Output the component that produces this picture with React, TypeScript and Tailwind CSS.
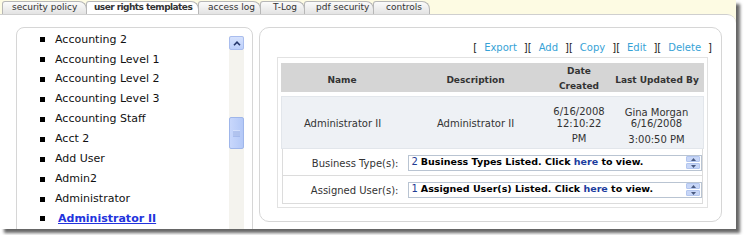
import React from "react";

const tabs = [
  { label: "security policy", cls: "w-[85px] pl-[9px]", sel: false },
  { label: "user rights templates", cls: "w-[113px] pl-[7px]", sel: true },
  { label: "access log", cls: "w-[63px] pl-[9px]", sel: false },
  { label: "T-Log", cls: "w-[45px] pl-[12px]", sel: false },
  { label: "pdf security", cls: "w-[70px] pl-[11px]", sel: false },
  { label: "controls", cls: "w-[57px] pl-[12px]", sel: false },
];

const items = [
  "Accounting 2",
  "Accounting Level 1",
  "Accounting Level 2",
  "Accounting Level 3",
  "Accounting Staff",
  "Acct 2",
  "Add User",
  "Admin2",
  "Administrator",
];

const actions = ["Export", "Add", "Copy", "Edit", "Delete"];

function Spinner() {
  return (
    <div className="flex flex-col gap-[1px] w-[14px] h-[13px] ml-auto mr-[1px]">
      <div className="flex-1 bg-[#c7d6f7] border border-[#b3c6ef] rounded-[1px] flex items-center justify-center">
        <svg width="5" height="3" viewBox="0 0 5 3">
          <path d="M0 3 L2.5 0 L5 3 Z" fill="#4a5a80" />
        </svg>
      </div>
      <div className="flex-1 bg-[#c7d6f7] border border-[#b3c6ef] rounded-[1px] flex items-center justify-center">
        <svg width="5" height="3" viewBox="0 0 5 3">
          <path d="M0 0 L2.5 3 L5 0 Z" fill="#4a5a80" />
        </svg>
      </div>
    </div>
  );
}

function InfoRow({
  label,
  num,
  text,
  last,
}: {
  label: string;
  num: string;
  text: string;
  last?: boolean;
}) {
  return (
    <div
      className={
        "h-[27px] flex items-start " + (last ? "" : "border-b border-[#dcdcdc]")
      }
    >
      <div className="w-[126px] pr-[10px] text-right text-[10px] text-[#333] h-full flex items-center justify-end pt-[2px]">
        {label}
      </div>
      <div className="mt-[6px] w-[295px] h-[16px] border border-[#b9c4d2] bg-white flex items-start pl-[2px]">
        <div className="text-[9.5px] leading-[12px] whitespace-nowrap">
          <span className="text-[10px] font-normal text-[#1f3a93]">{num}</span>{" "}
          <span className="font-bold text-black">{text} Click </span>
          <span className="font-bold text-[#1c3c9e]">here</span>
          <span className="font-bold text-black"> to view.</span>
        </div>
        <Spinner />
      </div>
    </div>
  );
}

export default function App() {
  return (
    <div className="w-[746px] h-[235px] bg-white font-['DejaVu_Sans',Verdana,sans-serif] text-[#222]">
      <div className="relative w-[736px] h-[229px] bg-[#fdfbe3] shadow-[4px_4px_3px_rgba(0,0,0,0.6)] flex flex-col overflow-hidden">
        {/* tabs */}
        <div className="h-[14px] flex items-end pl-[2px] shrink-0">
          {tabs.map((t) => (
            <div
              key={t.label}
              className={
                "h-[13px] flex items-center border-t border-l border-r border-[#b7b7b7] rounded-tl-[3px] rounded-tr-[8px] text-[9px] text-[#333] whitespace-nowrap -mr-[1px] " +
                t.cls +
                (t.sel
                  ? " bg-white font-bold tracking-[-0.55px] text-[#222]"
                  : " bg-gradient-to-b from-[#fbfbfb] to-[#e3e3e3]")
              }
            >
              {t.label}
            </div>
          ))}
        </div>

        {/* content */}
        <div className="flex-1 bg-white border-t border-[#cfcfcf] rounded-tr-[9px] flex items-start pl-[16px] pt-[12px] gap-[6px] min-h-0">
          {/* left panel */}
          <div className="w-[237px] h-[230px] shrink-0 border border-[#d6d6d6] rounded-t-[8px] flex">
            <div className="flex-1 pt-[2px] pl-[23px]">
              {items.map((it) => (
                <div key={it} className="h-[19.9px] flex items-center">
                  <span className="w-[5px] h-[5px] bg-black shrink-0" />
                  <span className="ml-[10px] text-[11px] text-[#111] whitespace-nowrap">
                    {it}
                  </span>
                </div>
              ))}
              <div className="h-[19.9px] flex items-center">
                <span className="w-[5px] h-[5px] bg-black shrink-0" />
                <span className="ml-[13px] text-[11px] font-bold text-[#2233dd] underline whitespace-nowrap">
                  Administrator II
                </span>
              </div>
            </div>
            {/* scrollbar */}
            <div className="w-[15px] mt-[8px] mr-[8px] bg-[#f4f3ee] flex flex-col">
              <div className="h-[14px] bg-gradient-to-b from-[#d6e2fd] to-[#bccffa] border border-[#a9bdee] rounded-[2px] flex items-center justify-center">
                <svg width="8" height="5" viewBox="0 0 8 5">
                  <path
                    d="M1 4.2 L4 1.2 L7 4.2"
                    stroke="#25366b"
                    strokeWidth="1.6"
                    fill="none"
                  />
                </svg>
              </div>
              <div className="h-[67px]" />
              <div className="h-[32px] bg-gradient-to-r from-[#c8d7fc] to-[#b3c8f7] border border-[#9fb6ea] rounded-[2px] flex items-center justify-center">
                <svg width="7" height="7" viewBox="0 0 7 7">
                  <path
                    d="M0 1 H7 M0 3 H7 M0 5 H7"
                    stroke="#e9efff"
                    strokeWidth="1"
                  />
                  <path
                    d="M0 2 H7 M0 4 H7 M0 6 H7"
                    stroke="#8ea6e0"
                    strokeWidth="1"
                  />
                </svg>
              </div>
            </div>
          </div>

          {/* right panel */}
          <div className="w-[463px] h-[195px] shrink-0 border border-[#d6d6d6] rounded-[10px] flex flex-col pt-[12px] pl-[17px]">
            <div className="h-[14px] flex items-center justify-end pr-[9px] text-[10px] text-[#222] whitespace-nowrap">
              {actions.map((a) => (
                <span key={a} className="flex items-center">
                  <span>[</span>
                  <span className="px-[7px] text-[#36a2d6]">{a}</span>
                  <span>]</span>
                </span>
              ))}
            </div>
            <div className="mt-[3px] w-[431px] border border-[#e2e2e2] px-[3px] pt-[5px] pb-[3px]">
              {/* header */}
              <div className="h-[29px] bg-[#d5d5d5] flex items-center text-[9px] font-bold text-[#333] text-center leading-[15px]">
                <div className="w-[122px] pt-[6px]">Name</div>
                <div className="w-[145px] pt-[6px]">Description</div>
                <div className="w-[62px] pt-[2px]">
                  Date
                  <br />
                  Created
                </div>
                <div className="w-[94px] pt-[6px]">Last Updated By</div>
              </div>
              {/* data row */}
              <div className="mt-[4px] h-[53px] bg-[#eef1f5] border border-[#e2e6eb] flex items-center text-[10px] text-[#333] text-center">
                <div className="w-[121px] pt-[2px]">Administrator II</div>
                <div className="w-[145px] pt-[2px]">Administrator II</div>
                <div className="w-[62px] leading-[12px] pt-[6px]">
                  <div>6/16/2008</div>
                  <div>12:10:22</div>
                  <div className="mt-[3px]">PM</div>
                </div>
                <div className="w-[93px] leading-[11px] pt-[7px]">
                  <div>Gina Morgan</div>
                  <div>6/16/2008</div>
                  <div className="mt-[5px]">3:00:50 PM</div>
                </div>
              </div>
              {/* info rows */}
              <div className="mx-[1px] border-x border-b border-[#dcdcdc]">
                <InfoRow
                  label="Business Type(s):"
                  num="2"
                  text="Business Types Listed."
                />
                <InfoRow
                  label="Assigned User(s):"
                  num="1"
                  text="Assigned User(s) Listed."
                  last
                />
              </div>
            </div>
          </div>
        </div>
      </div>
    </div>
  );
}
